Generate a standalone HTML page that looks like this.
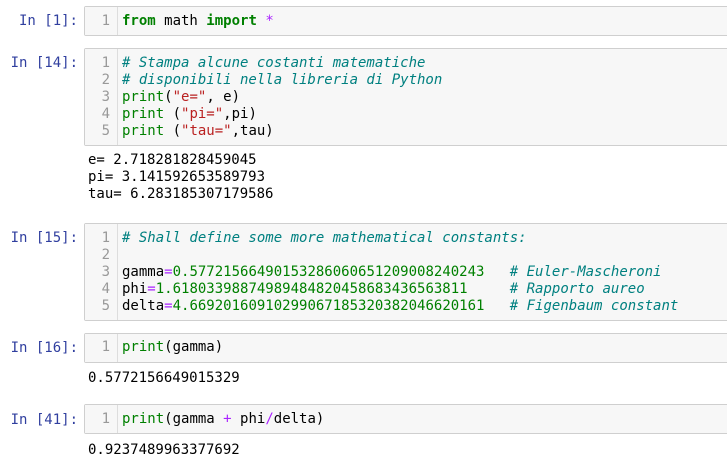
<!DOCTYPE html>
<html><head><meta charset="utf-8"><style>
body{margin:0;width:727px;height:463px;overflow:hidden;background:#fff;font-family:"DejaVu Sans Mono","Liberation Mono",monospace;font-size:14px;}
.p{position:absolute;left:0;width:78px;text-align:right;color:#303F9F;line-height:17px;}
.box{position:absolute;left:84px;width:660px;background:#f7f7f7;border:1px solid #cfcfcf;border-radius:2px;}
.g{position:absolute;left:0;top:0;bottom:0;width:32px;border-right:1px solid #ddd;background:#f7f7f7;}
.ln{position:absolute;left:0;width:25px;text-align:right;color:#999;line-height:17px;}
.code{position:absolute;left:37px;line-height:17px;white-space:pre;color:#000;}
.out{position:absolute;left:88px;line-height:17px;white-space:pre;color:#000;}
.k{color:#008000;font-weight:bold}.b{color:#008000}.c{color:#008080;font-style:italic}.s{color:#BA2121}.n{color:#008000}.o{color:#AA22FF}
</style></head><body>
<div class="p" style="top:13px">In [1]:</div>
<div class="box" style="top:6px;height:28px"><div class="g"></div><div class="ln" style="top:6px">1</div><div class="code" style="top:6px"><span class="k">from</span> math <span class="k">import</span> <span class="o">*</span></div></div>

<div class="p" style="top:55px">In [14]:</div>
<div class="box" style="top:48px;height:96px"><div class="g"></div><div class="ln" style="top:6px">1<br>2<br>3<br>4<br>5</div><div class="code" style="top:6px"><span class="c"># Stampa alcune costanti matematiche</span>
<span class="c"># disponibili nella libreria di Python</span>
<span class="b">print</span>(<span class="s">"e="</span>, e)
<span class="b">print</span> (<span class="s">"pi="</span>,pi)
<span class="b">print</span> (<span class="s">"tau="</span>,tau)</div></div>
<div class="out" style="top:152px">e= 2.718281828459045
pi= 3.141592653589793
tau= 6.283185307179586</div>

<div class="p" style="top:230px">In [15]:</div>
<div class="box" style="top:223px;height:96px"><div class="g"></div><div class="ln" style="top:6px">1<br>2<br>3<br>4<br>5</div><div class="code" style="top:6px"><span class="c"># Shall define some more mathematical constants:</span>

gamma<span class="o">=</span><span class="n">0.57721566490153286060651209008240243</span>   <span class="c"># Euler-Mascheroni</span>
phi<span class="o">=</span><span class="n">1.61803398874989484820458683436563811</span>     <span class="c"># Rapporto aureo</span>
delta<span class="o">=</span><span class="n">4.66920160910299067185320382046620161</span>   <span class="c"># Figenbaum constant</span></div></div>

<div class="p" style="top:340px">In [16]:</div>
<div class="box" style="top:333px;height:28px"><div class="g"></div><div class="ln" style="top:5px">1</div><div class="code" style="top:5px"><span class="b">print</span>(gamma)</div></div>
<div class="out" style="top:370px">0.5772156649015329</div>

<div class="p" style="top:412px">In [41]:</div>
<div class="box" style="top:404px;height:28px"><div class="g"></div><div class="ln" style="top:6px">1</div><div class="code" style="top:6px"><span class="b">print</span>(gamma <span class="o">+</span> phi<span class="o">/</span>delta)</div></div>
<div class="out" style="top:442px">0.9237489963377692</div>
</body></html>
